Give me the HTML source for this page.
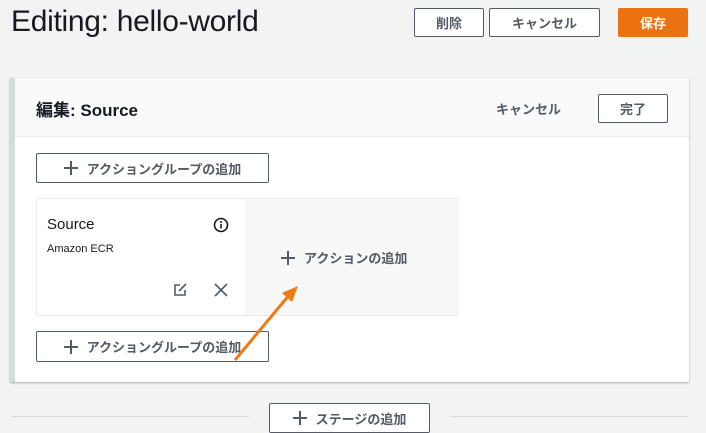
<!DOCTYPE html>
<html><head><meta charset="utf-8"><style>
*{box-sizing:border-box;margin:0;padding:0}
body{width:706px;height:433px;background:#f2f3f3;font-family:"Liberation Sans","Noto Sans CJK JP",sans-serif;color:#16191f;position:relative;overflow:hidden}
.a{position:absolute}
.btn{position:absolute;border:1px solid #545b64;background:#fff;border-radius:2px;font-size:13px;font-weight:bold;color:#545b64;display:flex;align-items:center;justify-content:center}
.plus{width:14px;height:14px;margin-right:9px;display:inline-block;flex:none}
</style></head><body>
<div class="a" style="left:11px;top:5px;font-size:30px;color:#16191f;letter-spacing:-0.3px">Editing: hello-world</div>
<div class="btn" style="left:414px;top:8px;width:70px;height:29px">削除</div>
<div class="btn" style="left:489px;top:8px;width:111px;height:29px">キャンセル</div>
<div class="btn" style="left:618px;top:8px;width:70px;height:29px;background:#ec7211;border-color:#ec7211;color:#fff">保存</div>

<div class="a" style="left:10px;top:78px;width:679px;height:304px;background:#fff;border-left:5px solid #d5dbdb;box-shadow:0 1px 2px rgba(0,0,0,.3)">
  <div class="a" style="left:0;top:0;width:674px;height:59px;background:#fafafa;border-bottom:1px solid #eaeded"></div>
  <div class="a" style="left:21px;top:18px;font-size:17px;font-weight:bold">編集: Source</div>
  <div class="a" style="left:481px;top:21px;font-size:13px;font-weight:bold;color:#545b64">キャンセル</div>
  <div class="btn" style="left:583px;top:16px;width:70px;height:29px">完了</div>
</div>
<div class="btn" style="left:36px;top:153px;width:233px;height:30px"><svg class="plus" viewBox="0 0 14 14"><path d="M7 0v14M0 7h14" stroke="#545b64" stroke-width="2"/></svg>アクショングループの追加</div>
<div class="a" style="left:36px;top:198px;width:422px;height:118px;border:1px solid #eaeded;background:#fff"></div>
<div class="a" style="left:246px;top:199px;width:211px;height:116px;background:#f8f8f8;border-left:1px solid #eaeded"></div>
<div class="a" style="left:47px;top:216px;font-size:15px">Source</div>
<div class="a" style="left:47px;top:243px;font-size:11px">Amazon ECR</div>
<svg class="a" style="left:213px;top:217px" width="16" height="16" viewBox="0 0 16 16"><circle cx="8" cy="8" r="6.5" fill="none" stroke="#16191f" stroke-width="1.6"/><rect x="7.2" y="7" width="1.6" height="4.5" fill="#16191f"/><circle cx="8" cy="5" r="1" fill="#16191f"/></svg>
<svg class="a" style="left:172px;top:282px" width="16" height="16" viewBox="0 0 16 16"><path d="M8 3H3v10h10V8M7 9l7-7" fill="none" stroke="#545b64" stroke-width="1.6"/></svg>
<svg class="a" style="left:213px;top:282px" width="16" height="16" viewBox="0 0 16 16"><path d="M2 2l12 12M14 2L2 14" stroke="#545b64" stroke-width="1.6"/></svg>
<div class="a" style="left:281px;top:248px;font-size:13px;font-weight:bold;color:#545b64;display:flex;align-items:center"><svg class="plus" viewBox="0 0 14 14"><path d="M7 0v14M0 7h14" stroke="#545b64" stroke-width="2"/></svg>アクションの追加</div>
<div class="btn" style="left:36px;top:331px;width:233px;height:31px"><svg class="plus" viewBox="0 0 14 14"><path d="M7 0v14M0 7h14" stroke="#545b64" stroke-width="2"/></svg>アクショングループの追加</div>
<svg class="a" style="left:0;top:0" width="706" height="433"><path d="M235 360L290 294" stroke="#f07a10" stroke-width="3"/><path d="M298 286L282 293L292 302Z" fill="#f07a10"/></svg>
<div class="a" style="left:11px;top:416px;width:238px;height:1px;background:#d5dbdb"></div>
<div class="a" style="left:450px;top:416px;width:238px;height:1px;background:#d5dbdb"></div>
<div class="btn" style="left:269px;top:403px;width:161px;height:30px"><svg class="plus" viewBox="0 0 14 14"><path d="M7 0v14M0 7h14" stroke="#545b64" stroke-width="2"/></svg>ステージの追加</div>
</body></html>
